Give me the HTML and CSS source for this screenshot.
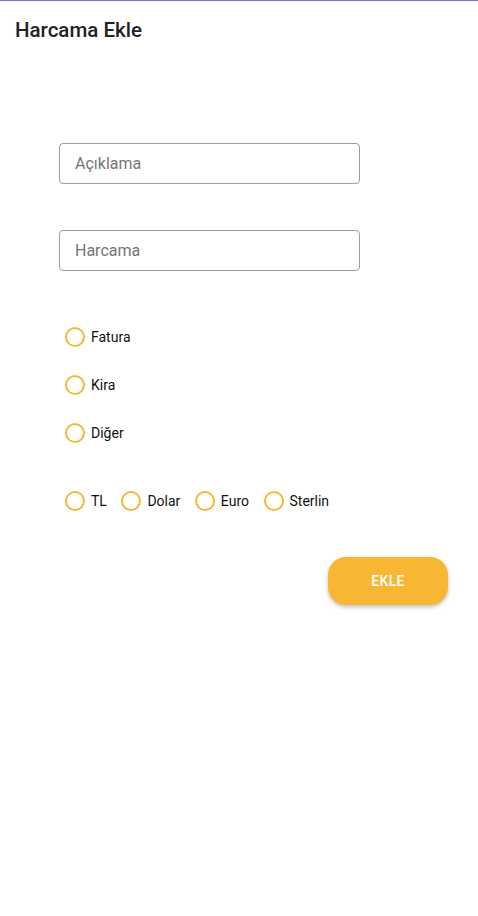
FILE: index.html
```html
<!DOCTYPE html>
<html>
<head>
<meta charset="UTF-8">
<link rel="stylesheet" href="styles.css">
</head>
<body>
<div class="topline"></div>
<div class="header">
  <h1 class="title">Harcama Ekle</h1>
</div>

<form class="form">
  <input class="field" type="text" placeholder="Açıklama">
  <input class="field field-second" type="text" placeholder="Harcama">

  <div class="group">
    <label class="radio"><span class="circle"></span><span class="label">Fatura</span></label>
    <label class="radio"><span class="circle"></span><span class="label">Kira</span></label>
    <label class="radio"><span class="circle"></span><span class="label">Diğer</span></label>
  </div>

  <div class="currency">
    <label class="radio"><span class="circle"></span><span class="label">TL</span></label>
    <label class="radio"><span class="circle"></span><span class="label">Dolar</span></label>
    <label class="radio"><span class="circle"></span><span class="label">Euro</span></label>
    <label class="radio"><span class="circle"></span><span class="label">Sterlin</span></label>
  </div>

  <div class="actions">
    <button type="button" class="add-btn">EKLE</button>
  </div>
</form>
</body>
</html>
```

FILE: styles.css
```css
:root {
  --accent: #f8b733;
  --text-primary: #212121;
  --text-hint: #757575;
  --border: #9e9e9e;
}

* {
  box-sizing: border-box;
  margin: 0;
  padding: 0;
}

body {
  width: 478px;
  min-height: 916px;
  font-family: Roboto, "Noto Sans", sans-serif;
  background: #ffffff;
  color: var(--text-primary);
}

.topline {
  height: 1px;
  background: #8b6ad6;
}

.header {
  height: 56px;
  padding: 0 15px;
  display: flex;
  align-items: center;
}

.title {
  font-size: 20.5px;
  font-weight: 500;
  color: #222222;
  margin-top: 2px;
}

.form {
  display: flex;
  flex-direction: column;
  padding: 86px 30px 0 59px;
}

.field {
  width: 301px;
  height: 41px;
  border: 1px solid var(--border);
  border-radius: 4px;
  padding: 0 15px;
  font-family: inherit;
  font-size: 16px;
  color: var(--text-primary);
  background: #ffffff;
}

.field::placeholder {
  color: var(--text-hint);
}

.field:focus {
  outline: none;
  border-color: var(--accent);
}

.field-second {
  margin-top: 46px;
}

.group {
  display: flex;
  flex-direction: column;
  margin-top: 42px;
}

.currency {
  display: flex;
  margin-top: 20px;
}

.radio {
  display: flex;
  align-items: center;
  height: 48px;
  padding-left: 6px;
  gap: 6px;
  font-size: 14px;
  color: #111111;
  cursor: pointer;
}

.currency .radio {
  padding-right: 8.5px;
}

.circle {
  width: 20px;
  height: 20px;
  border: 2px solid var(--accent);
  border-radius: 50%;
}

.actions {
  display: flex;
  justify-content: flex-end;
  margin-top: 32px;
}

.add-btn {
  width: 120px;
  height: 48px;
  border: none;
  border-radius: 18px;
  background: var(--accent);
  color: #ffffff;
  font-family: inherit;
  font-size: 14px;
  font-weight: 500;
  letter-spacing: 0.3px;
  box-shadow: 0 2px 4px rgba(0,0,0,0.25);
  cursor: pointer;
}
```
